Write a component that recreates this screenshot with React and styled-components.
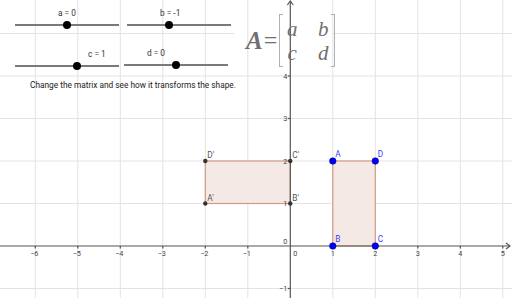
import React from 'react';
import styled, { createGlobalStyle } from 'styled-components';

const GlobalStyle = createGlobalStyle`
  html, body {
    margin: 0;
    padding: 0;
    background: #ffffff;
  }
  body {
    font-family: Roboto, "Liberation Sans", sans-serif;
  }
`;

const O = { x: 290.3, y: 246 };
const U = 42.5;
const px = (v) => O.x + v * U;
const py = (v) => O.y - v * U;

const Applet = styled.div`
  position: relative;
  width: 512px;
  height: 298px;
  overflow: hidden;
  background: #ffffff;
`;

const Canvas = styled.svg`
  display: block;
  width: 512px;
  height: 298px;
`;

const SliderBox = styled.div`
  position: absolute;
  left: ${({ $x }) => $x}px;
  top: ${({ $y }) => $y}px;
  width: ${({ $w }) => $w}px;
  height: 2px;
  background: #7a7a7a;
`;

const Knob = styled.span`
  position: absolute;
  top: -3px;
  width: 8px;
  height: 8px;
  margin-left: -4px;
  border-radius: 50%;
  background: #000000;
`;

const SliderLabel = styled.span`
  position: absolute;
  top: -16px;
  font-size: 8.3px;
  line-height: 10px;
  color: #333333;
  white-space: nowrap;
`;

const Caption = styled.p`
  position: absolute;
  left: 30px;
  top: 80px;
  margin: 0;
  font-size: 8.3px;
  line-height: 10px;
  color: #222222;
  white-space: nowrap;
`;

const Formula = styled.div`
  position: absolute;
  left: 246px;
  top: 14px;
  display: flex;
  align-items: center;
  font-family: "Liberation Serif", "DejaVu Serif", serif;
  font-style: italic;
  color: #6f6f6f;
`;

const Name = styled.span`
  font-size: 25px;
  font-weight: bold;
  line-height: 53px;
`;

const Equals = styled.span`
  font-style: normal;
  font-size: 24px;
  line-height: 53px;
  margin-left: 1px;
  margin-right: 2px;
`;

const Bracket = styled.div`
  position: relative;
  display: grid;
  grid-template-columns: 14px 14px;
  grid-template-rows: 24px 24px;
  column-gap: 17px;
  align-content: center;
  justify-items: center;
  height: 53px;
  padding: 0 4px 0 5px;
  border-left: 1px solid #b0b0b0;
  border-right: 1px solid #b0b0b0;

  &::before,
  &::after {
    content: '';
    position: absolute;
    top: 0;
    bottom: 0;
    width: 3px;
    border-top: 1px solid #b0b0b0;
    border-bottom: 1px solid #b0b0b0;
  }
  &::before {
    left: 0;
  }
  &::after {
    right: 0;
  }
`;

const Entry = styled.span`
  font-size: 21px;
  line-height: 24px;
`;

const sliders = [
  { name: 'a', value: '0', x: 15, y: 24, w: 104, knob: 52, label: 43 },
  { name: 'b', value: '-1', x: 127, y: 24, w: 104, knob: 42, label: 33 },
  { name: 'c', value: '1', x: 15, y: 65, w: 104, knob: 62, label: 73 },
  { name: 'd', value: '0', x: 124, y: 64, w: 104, knob: 52, label: 23 },
];

const Slider = ({ name, value, x, y, w, knob, label }) => (
  <SliderBox $x={x} $y={y} $w={w}>
    <SliderLabel style={{ left: label }}>
      {name} = {value}
    </SliderLabel>
    <Knob style={{ left: knob }} />
  </SliderBox>
);

const xs = [-6, -5, -4, -3, -2, -1, 1, 2, 3, 4, 5];
const ys = [-1, 1, 2, 3, 4];

const image = [
  { n: "A'", x: -2, y: 1 },
  { n: "B'", x: 0, y: 1 },
  { n: "C'", x: 0, y: 2 },
  { n: "D'", x: -2, y: 2 },
];

const shape = [
  { n: 'A', x: 1, y: 2 },
  { n: 'B', x: 1, y: 0 },
  { n: 'C', x: 2, y: 0 },
  { n: 'D', x: 2, y: 2 },
];

const Graph = () => (
  <Canvas viewBox="0 0 512 298">
    <g stroke="#e3e3e3" strokeWidth="1">
      {xs.map((v) => (
        <line key={`gx${v}`} x1={px(v)} y1="0" x2={px(v)} y2="298" />
      ))}
      {ys.map((v) => (
        <line key={`gy${v}`} x1="0" y1={py(v)} x2="512" y2={py(v)} />
      ))}
      <line x1="0" y1={py(5)} x2="234" y2={py(5)} />
      <line x1="333" y1={py(5)} x2="512" y2={py(5)} />
    </g>

    <rect
      x={px(-2)}
      y={py(2)}
      width={2 * U}
      height={U}
      fill="#f4e9e4"
      stroke="#cf9b82"
      strokeWidth="1.2"
    />
    <rect
      x={px(1)}
      y={py(2)}
      width={U}
      height={2 * U}
      fill="#f4e9e4"
      stroke="#cf9b82"
      strokeWidth="1.2"
    />

    <g stroke="#555" strokeWidth="1.2" fill="none">
      <line x1="0" y1={O.y} x2="510" y2={O.y} />
      <line x1={O.x} y1="298" x2={O.x} y2="1" />
      <path d={`M506 ${O.y - 3} L510 ${O.y} L506 ${O.y + 3}`} />
      <path d={`M${O.x - 3} 5 L${O.x} 1 L${O.x + 3} 5`} />
      {xs.map((v) => (
        <line key={`tx${v}`} x1={px(v)} y1={O.y} x2={px(v)} y2={O.y + 2.5} />
      ))}
      {ys.map((v) => (
        <line key={`ty${v}`} x1={O.x - 2.5} y1={py(v)} x2={O.x} y2={py(v)} />
      ))}
    </g>

    <g fill="#444" fontSize="7.3" fontFamily="Roboto, 'Liberation Sans', sans-serif">
      {xs.map((v) => (
        <text key={`lx${v}`} x={px(v) + (v < 0 ? -1 : 0)} y={O.y + 10} textAnchor="middle">
          {v < 0 ? `\u2212${-v}` : v}
        </text>
      ))}
      {ys.map((v) => (
        <text key={`ly${v}`} x={O.x - 3} y={py(v) + 2.5} textAnchor="end">
          {v < 0 ? `\u2212${-v}` : v}
        </text>
      ))}
      <text x={O.x - 3} y={O.y - 2} textAnchor="end">0</text>
      <text x={O.x + 3} y={O.y + 10}>0</text>
    </g>

    {image.map((p) => (
      <g key={p.n}>
        <circle cx={px(p.x)} cy={py(p.y)} r="2.2" fill="#333" />
        <text
          x={px(p.x) + 2}
          y={py(p.y) - 3}
          fontSize="8.3"
          fill="#555"
          fontFamily="Roboto, 'Liberation Sans', sans-serif"
        >
          {p.n}
        </text>
      </g>
    ))}

    {shape.map((p) => (
      <g key={p.n}>
        <circle cx={px(p.x)} cy={py(p.y)} r="3.3" fill="#0000ff" stroke="#000066" strokeWidth="0.5" />
        <text
          x={px(p.x) + 2.5}
          y={py(p.y) - 4}
          fontSize="8.3"
          fill="#4040ff"
          fontFamily="Roboto, 'Liberation Sans', sans-serif"
        >
          {p.n}
        </text>
      </g>
    ))}
  </Canvas>
);

const App = () => (
  <Applet>
    <GlobalStyle />
    <Graph />
    {sliders.map((s) => (
      <Slider key={s.name} {...s} />
    ))}
    <Formula>
      <Name>A</Name>
      <Equals>=</Equals>
      <Bracket>
        <Entry>a</Entry>
        <Entry>b</Entry>
        <Entry>c</Entry>
        <Entry>d</Entry>
      </Bracket>
    </Formula>
    <Caption>Change the matrix and see how it transforms the shape.</Caption>
  </Applet>
);

export default App;
